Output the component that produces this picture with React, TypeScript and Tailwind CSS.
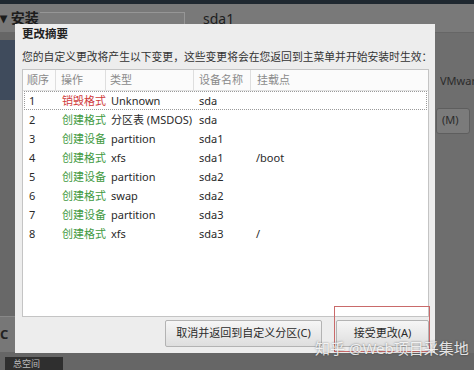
import React from 'react';

const rows = [
  { n: '1', op: '销毁格式', red: true, type: 'Unknown', dev: 'sda', mount: '' },
  { n: '2', op: '创建格式', red: false, type: '分区表 (MSDOS)', dev: 'sda', mount: '' },
  { n: '3', op: '创建设备', red: false, type: 'partition', dev: 'sda1', mount: '' },
  { n: '4', op: '创建格式', red: false, type: 'xfs', dev: 'sda1', mount: '/boot' },
  { n: '5', op: '创建设备', red: false, type: 'partition', dev: 'sda2', mount: '' },
  { n: '6', op: '创建格式', red: false, type: 'swap', dev: 'sda2', mount: '' },
  { n: '7', op: '创建设备', red: false, type: 'partition', dev: 'sda3', mount: '' },
  { n: '8', op: '创建格式', red: false, type: 'xfs', dev: 'sda3', mount: '/' },
];

const font = { fontFamily: '"Noto Sans", "Noto Sans CJK SC", sans-serif' };

function Cells({ n, op, red, type, dev, mount }: (typeof rows)[number]) {
  return (
    <>
      <div className="w-[33px] pl-[4px]">{n}</div>
      <div className={`w-[50px] pl-[4px] ${red ? 'text-[#cf3b3b]' : 'text-[#3f9a3f]'}`}>{op}</div>
      <div className="w-[88px] pl-[3px]">{type}</div>
      <div className="w-[57px] pl-[3px]">{dev}</div>
      <div className="flex-1 pl-[3px]">{mount}</div>
    </>
  );
}

export default function App() {
  return (
    <div className="relative w-[474px] h-[370px] overflow-hidden bg-[#6e6e6e] text-[11px]" style={font}>
      {/* background installer screen */}
      <div className="h-[4px] bg-[#1f2830]" />
      <div className="h-[29px] bg-[#797979] border-b border-[#666] flex items-start">
        <div className="pt-[5px] w-[40px] text-[14px] font-bold text-[#1c1c1c] leading-[18px]">▾ 安装</div>
        <div className="mt-[8px] w-[145px] h-[21px] border-t border-r border-[#969696] bg-[#7c7c7c]" />
        <div className="pl-[18px] pt-[6px] text-[14px] text-[#1e1e1e] leading-[18px]">sda1</div>
      </div>
      <div className="flex h-[320px]">
        <div className="w-[15px] flex flex-col bg-[#666]">
          <div className="h-[7px]" />
          <div className="h-[60px] bg-[#3f4b5c]" />
          <div className="h-[216px] bg-[#686868]" />
          <div className="h-[36px] bg-[#777] border-t border-[#888] flex items-center text-[13px] font-bold text-[#222] leading-none">C</div>
        </div>
        <div className="flex-1" />
        <div className="w-[39px] flex flex-col pl-[5px]">
          <div className="mt-[40px] text-[11px] text-[#2b2b2b] whitespace-nowrap overflow-hidden">VMwar</div>
          <div className="mt-[18px] h-[26px] w-[34px] -ml-[4px] rounded-[3px] border border-[#5e5e5e] bg-[#7b7b7b] flex items-center pl-[5px] text-[#2b2b2b]">(M)</div>
        </div>
      </div>
      <div className="h-[17px] bg-[#666] pl-[5px] flex items-end">
        <div className="h-[13px] w-[58px] bg-[#2f2f2f] text-[9px] text-[#bbb] pl-[8px] leading-[14px] overflow-hidden">总空间</div>
      </div>

      {/* modal dialog */}
      <div className="absolute left-[15px] top-[24px] w-[420px] h-[329px] bg-[#ededed] pl-[7px] pr-[6px] flex flex-col text-[#2a2a2a]">
        <div className="h-[20px] leading-[20px] text-[11.5px] font-bold text-[#222]">更改摘要</div>
        <div className="mt-[3px] h-[20px] leading-[20px] text-[10.8px] whitespace-nowrap text-[#333]">
          您的自定义更改将产生以下变更，这些变更将会在您返回到主菜单并开始安装时生效：
        </div>
        <div className="mt-[2px] h-[248px] bg-white border border-[#c4c4c4] flex flex-col">
          <div className="h-[21px] flex items-stretch text-[#8a8a8a] border-b border-[#e2e2e2] bg-[#fbfbfb]">
            <div className="w-[33px] pl-[4px] flex items-center border-r border-[#dedede]">顺序</div>
            <div className="w-[50px] pl-[5px] flex items-center border-r border-[#dedede]">操作</div>
            <div className="w-[88px] pl-[4px] flex items-center border-r border-[#dedede]">类型</div>
            <div className="w-[57px] pl-[5px] flex items-center border-r border-[#dedede]">设备名称</div>
            <div className="flex-1 pl-[6px] flex items-center">挂载点</div>
          </div>
          {rows.map((r, i) => (
            <div
              key={r.n}
              className={`flex items-center h-[19px] leading-[19px] text-[#2a2a2a] ${
                i === 0 ? 'mx-[1px] border border-dotted border-[#9a9a9a]' : 'mx-[2px]'
              }`}
            >
              <Cells {...r} />
            </div>
          ))}
        </div>
        <div className="mt-[3px] flex justify-end gap-[14px]">
          <button className="h-[27px] w-[157px] rounded-[2px] border border-[#b3b3b3] bg-gradient-to-b from-[#f6f6f6] to-[#dedede] text-[11px] text-[#2a2a2a]">
            取消并返回到自定义分区(C)
          </button>
          <button className="h-[27px] w-[93px] rounded-[2px] border border-[#b3b3b3] bg-gradient-to-b from-[#f6f6f6] to-[#dedede] text-[11px] text-[#2a2a2a]">
            接受更改(A)
          </button>
        </div>
      </div>

      {/* annotation box */}
      <div className="absolute left-[334px] top-[306px] w-[96px] h-[46px] border border-[#c96a6a]" />

      {/* watermark */}
      <div
        className="absolute left-[315px] top-[338px] text-[15px] leading-[20px] text-white/85 whitespace-nowrap"
        style={{ textShadow: '0 0 2px rgba(0,0,0,0.5)' }}
      >
        知乎 @Web项目采集地
      </div>
    </div>
  );
}
